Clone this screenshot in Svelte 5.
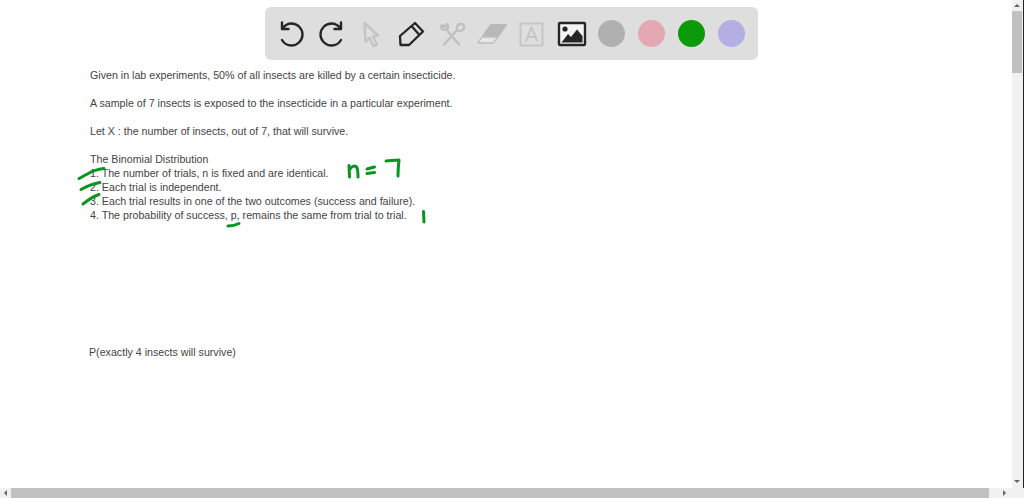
<script>
  const lines = [
    'Given in lab experiments, 50% of all insects are killed by a certain insecticide.',
    '',
    'A sample of 7 insects is exposed to the insecticide in a particular experiment.',
    '',
    'Let X : the number of insects, out of 7, that will survive.',
    '',
    'The Binomial Distribution',
    '1. The number of trials, n is fixed and are identical.',
    '2. Each trial is independent.',
    '3. Each trial results in one of the two outcomes (success and failure).',
    '4. The probability of success, p, remains the same from trial to trial.'
  ];
  const dots = ['#b0b0b0', '#e3a8b2', '#0a9a0a', '#b3afe3'];
</script>

<div class="page">
  <div class="main">
    <div class="sheet">
      <div class="doc">
        {#each lines as line}
          <div class="line">{line}</div>
        {/each}
        <div class="prob">P(exactly 4 insects will survive)</div>
      </div>

      <svg class="ink" width="1012" height="488" viewBox="0 0 1012 488" fill="none" stroke="#0a9420" stroke-linecap="round" stroke-linejoin="round" stroke-width="3">
        <path d="M79 178.5 C86 175 92 169.5 104 168.5" />
        <path d="M81 189.5 C87 186 93 184 100 182.5" />
        <path d="M83 204 C88 200 93 196.5 99 194.5" />
        <path d="M228 226 C232 226 236 225 239 223.5" />
        <path d="M423.5 211.5 L424 222" />
        <path d="M349.5 177 L349 165.5 M349.5 170 C351 166.5 355 165 356.5 167 C358 169 358 173 358 177" />
        <path d="M367 169 L374.5 167 M367 173.5 L374.5 172.5" />
        <path d="M386 161 C390 161 394 160 399 160 C398.5 165 398 170 398 176" />
      </svg>

      <div class="toolbar">
        <svg class="tool" viewBox="0 0 30 30" fill="none" stroke="#262626" stroke-width="2.4" stroke-linecap="round" stroke-linejoin="round">
          <path d="M5 3.5 V10 H11.5" />
          <path d="M5.5 9.5 C8 6 11 4.5 14.5 4.5 C20.5 4.5 25.5 9.5 25.5 15.5 C25.5 21.5 20.5 26.5 14.5 26.5 C10.5 26.5 7 24.5 5 21" />
        </svg>
        <svg class="tool" viewBox="0 0 30 30" fill="none" stroke="#262626" stroke-width="2.4" stroke-linecap="round" stroke-linejoin="round">
          <path d="M24 3.5 V10 H17.5" />
          <path d="M23.5 9.5 C21 6 18 4.5 14.5 4.5 C8.5 4.5 3.5 9.5 3.5 15.5 C3.5 21.5 8.5 26.5 14.5 26.5 C18.5 26.5 22 24.5 24 21" />
        </svg>
        <svg class="tool" viewBox="0 0 30 30" fill="none" stroke="#c4c4c4" stroke-width="2.4" stroke-linejoin="round">
          <path d="M7.5 4 L21 16.5 L16 17.5 L20 25.5 L16.5 27 L12.5 19 L8.5 22.5 Z" />
        </svg>
        <svg class="tool" viewBox="0 0 30 30" fill="none" stroke="#262626" stroke-width="2.3" stroke-linejoin="round">
          <path d="M3 17 L18 4 L26 12.5 L12 26 H3.5 Z" />
          <path d="M14.5 7 L22 15.5" />
        </svg>
        <svg class="tool" viewBox="0 0 30 30" fill="none" stroke="#bfbfbf" stroke-width="2.3" stroke-linecap="round" stroke-linejoin="round">
          <path d="M9 10 L22 25.5 M20 11 L7 25.5" />
          <path d="M4 7 C4 10 7 12 10 10 C12 8 11 6 10 5 L8 8 L5 6" />
          <path d="M20 11 C19 7 21 5 24 5 C27 5 28 8 26.5 10 C25 12 22 12.5 20 11 Z" />
        </svg>
        <svg class="tool" viewBox="0 0 30 30" stroke-linejoin="round">
          <path d="M13.5 5.5 H30 L21 18 H5 Z" fill="#b8b8b8" stroke="#b8b8b8" stroke-width="1" />
          <path d="M5 18 H21 L16 24 H1 Z" fill="#e6e6e6" stroke="#bdbdbd" stroke-width="1.3" />
        </svg>
        <svg class="tool" viewBox="0 0 30 30" fill="none" stroke="#c6c6c6" stroke-width="2">
          <rect x="3.5" y="4.5" width="22" height="22" />
          <path d="M8.5 22.5 L14.5 8.5 L20.5 22.5 M10.5 18 H18.5" />
        </svg>
        <svg class="tool" viewBox="0 0 30 30" fill="none">
          <rect x="2" y="4" width="26" height="22" rx="1" stroke="#262626" stroke-width="2.4" fill="#f4f4f4" />
          <circle cx="8" cy="10" r="2.6" fill="#262626" />
          <path d="M4.5 23.5 L11 15 L14 18 L20 10.5 L25.5 17 V23.5 Z" fill="#262626" />
        </svg>
        <div class="dots">
          {#each dots as c}
            <span class="dot" style="background:{c}"></span>
          {/each}
        </div>
      </div>
    </div>

    <div class="vbar">
      <span class="arrow up"></span>
      <div class="vthumb"></div>
      <span class="arrow down"></span>
    </div>
  </div>

  <div class="hbar">
    <span class="arrow left"></span>
    <div class="hthumb"></div>
    <span class="arrow right"></span>
  </div>
</div>

<style>
  :global(body) {
    margin: 0;
    background: #fff;
    overflow: hidden;
  }

  .page {
    width: 1024px;
    height: 498px;
    display: flex;
    flex-direction: column;
    font-family: "Liberation Sans", Arial, sans-serif;
  }

  .main {
    flex: 1;
    display: flex;
    min-height: 0;
  }

  .sheet {
    flex: 1;
    position: relative;
  }

  .doc {
    padding: 68px 0 0 90px;
    font-size: 10.66px;
    line-height: 14px;
    color: #444;
  }

  .line {
    height: 14px;
    white-space: nowrap;
  }

  .prob {
    margin-top: 123px;
    margin-left: -1px;
  }

  .ink {
    position: absolute;
    top: 0;
    left: 0;
  }

  .toolbar {
    position: absolute;
    top: 7px;
    left: 265px;
    width: 493px;
    height: 53px;
    box-sizing: border-box;
    padding-left: 12px;
    display: flex;
    align-items: center;
    gap: 10px;
    background: #dedede;
    border-radius: 6px;
  }

  .tool {
    width: 30px;
    height: 30px;
    flex: none;
  }

  .dots {
    display: flex;
    gap: 13px;
    margin-left: 1px;
  }

  .dot {
    width: 27px;
    height: 27px;
    border-radius: 50%;
    flex: none;
  }

  .vbar {
    width: 12px;
    flex: none;
    background: #f1f1f1;
    display: flex;
    flex-direction: column;
    align-items: flex-start;
    border-right: 1px solid #222;
    box-sizing: border-box;
  }

  .vthumb {
    width: 10px;
    height: 62px;
    margin-top: 4px;
    background: #c1c1c1;
  }

  .hbar {
    height: 10px;
    flex: none;
    background: #f1f1f1;
    display: flex;
    align-items: center;
  }

  .hthumb {
    width: 978px;
    height: 10px;
    margin-left: 4px;
    background: #c1c1c1;
  }

  .arrow {
    width: 0;
    height: 0;
    flex: none;
    border-style: solid;
    border-color: transparent;
  }

  .up {
    margin-top: 4px;
    margin-left: 2px;
    border-width: 0 3px 3px;
    border-bottom-color: #666;
  }

  .down {
    margin-top: auto;
    margin-bottom: 5px;
    margin-left: 2px;
    border-width: 3px 3px 0;
    border-top-color: #666;
  }

  .left {
    margin-left: 4px;
    border-width: 3px 3px 3px 0;
    border-right-color: #666;
  }

  .right {
    margin-left: 14px;
    border-width: 3px 0 3px 3px;
    border-left-color: #666;
  }
</style>
